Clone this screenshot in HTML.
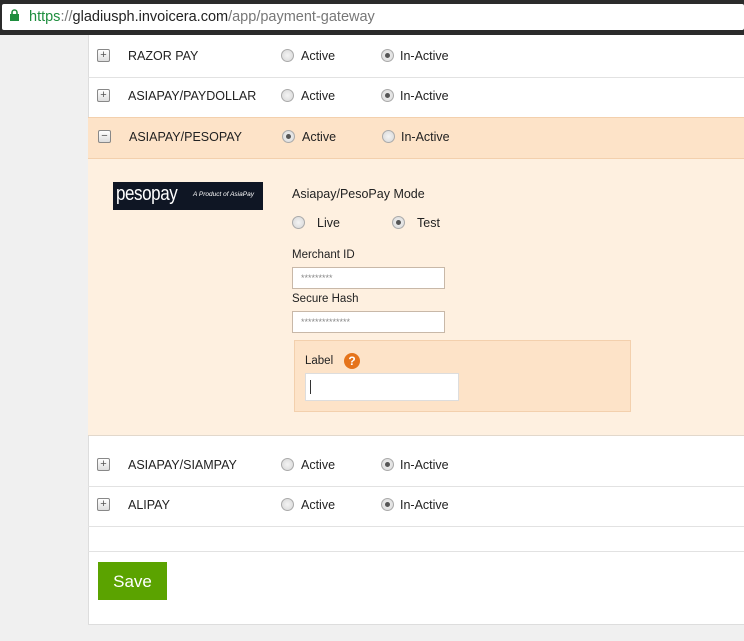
<!DOCTYPE html>
<html><head><style>
*{margin:0;padding:0;box-sizing:border-box}
body{width:744px;height:641px;background:#f0f0f0;font-family:"Liberation Sans",sans-serif;position:relative;overflow:hidden;color:#222}
.a{position:absolute}
.t{font-size:12.5px;line-height:14px}
.pm{position:absolute;width:13px;height:13px;border:1px solid #888;border-radius:2px;background:linear-gradient(#fff,#ddd);font-size:11px;line-height:11px;text-align:center;color:#555}
.r{position:absolute;width:13px;height:13px;border-radius:50%;border:1px solid #aaa;background:radial-gradient(#f4f4f4,#d6d6d6)}
.r.on::after{content:"";position:absolute;left:3px;top:3px;width:5px;height:5px;border-radius:50%;background:#555}
.line{position:absolute;left:88px;width:656px;height:1px;background:#e2e2e2}
input{position:absolute;border:1px solid #c8b8a8;background:#fff;font-size:9px;padding-left:8px;color:#888}
</style></head><body>
<div class="a" style="left:0;top:0;width:744px;height:35px;background:#2b2b2b"></div>
<div class="a" style="left:2px;top:4px;width:742px;height:26px;background:#fff;border-radius:2px"></div>
<svg class="a" style="left:9px;top:9px" width="11" height="13"><rect x="1" y="5" width="9" height="7" fill="#1e8e3e"/><path d="M3 5V3.5a2.5 2.5 0 0 1 5 0V5" stroke="#1e8e3e" stroke-width="1.6" fill="none"/></svg>
<div class="a" style="left:29px;top:9px;font-size:14.5px;color:#222"><span style="color:#1e8e3e">https</span><span style="color:#777">://</span>gladiusph.invoicera.com<span style="color:#777">/app/payment-gateway</span></div>

<div class="a" style="left:88px;top:35px;width:656px;height:590px;background:#fff;border-left:1px solid #ddd;border-bottom:1px solid #ddd"></div>

<div class="pm" style="left:97px;top:49px">+</div>
<div class="a t" style="left:128px;top:49px">RAZOR PAY</div>
<div class="r" style="left:281px;top:49px"></div><div class="a t" style="left:301px;top:49px">Active</div>
<div class="r on" style="left:381px;top:49px"></div><div class="a t" style="left:400px;top:49px">In-Active</div>
<div class="line" style="top:77px"></div>
<div class="pm" style="left:97px;top:89px">+</div>
<div class="a t" style="left:128px;top:89px">ASIAPAY/PAYDOLLAR</div>
<div class="r" style="left:281px;top:89px"></div><div class="a t" style="left:301px;top:89px">Active</div>
<div class="r on" style="left:381px;top:89px"></div><div class="a t" style="left:400px;top:89px">In-Active</div>
<div class="a" style="left:88px;top:117px;width:656px;height:42px;background:#fde3c8;border-top:1px solid #f3d0ad;border-bottom:1px solid #f3d0ad"></div>
<div class="pm" style="left:98px;top:130px">−</div>
<div class="a t" style="left:129px;top:130px">ASIAPAY/PESOPAY</div>
<div class="r on" style="left:282px;top:130px"></div><div class="a t" style="left:302px;top:130px">Active</div>
<div class="r" style="left:382px;top:130px"></div><div class="a t" style="left:401px;top:130px">In-Active</div>
<div class="a" style="left:88px;top:159px;width:656px;height:277px;background:#fef0e0;border-bottom:1px solid #e2d8cc"></div>
<div class="a" style="left:113px;top:182px;width:150px;height:28px;background:#0f1624;color:#fff;overflow:hidden"><span class="a" style="left:3px;top:1px;font-size:20px;letter-spacing:-0.5px;transform:scaleX(0.85);transform-origin:left">pesopay</span><span class="a" style="left:80px;top:9px;font-size:6.5px;font-style:italic;white-space:nowrap">A Product of AsiaPay</span></div>
<div class="a t" style="left:292px;top:187px">Asiapay/PesoPay Mode</div>
<div class="r" style="left:292px;top:216px"></div><div class="a t" style="left:317px;top:216px">Live</div>
<div class="r on" style="left:392px;top:216px"></div><div class="a t" style="left:417px;top:216px">Test</div>
<div class="a" style="left:292px;top:249px;font-size:11.5px">Merchant ID</div>
<input style="left:292px;top:267px;width:153px;height:22px" value="*********">
<div class="a" style="left:292px;top:293px;font-size:11.5px">Secure Hash</div>
<input style="left:292px;top:311px;width:153px;height:22px" value="**************">
<div class="a" style="left:294px;top:340px;width:337px;height:72px;background:#fde3c8;border:1px solid #f3d0ad"></div>
<div class="a" style="left:305px;top:355px;font-size:11.5px">Label</div>
<div class="a" style="left:344px;top:353px;width:16px;height:16px;border-radius:50%;background:#e5741c;color:#fff;font-size:12px;font-weight:bold;text-align:center;line-height:16px">?</div>
<div class="a" style="left:305px;top:373px;width:154px;height:28px;background:#fff;border:1px solid #ddd"><div class="a" style="left:4px;top:6px;width:1px;height:14px;background:#333"></div></div>
<div class="pm" style="left:97px;top:458px">+</div>
<div class="a t" style="left:128px;top:458px">ASIAPAY/SIAMPAY</div>
<div class="r" style="left:281px;top:458px"></div><div class="a t" style="left:301px;top:458px">Active</div>
<div class="r on" style="left:381px;top:458px"></div><div class="a t" style="left:400px;top:458px">In-Active</div>
<div class="line" style="top:486px"></div>
<div class="pm" style="left:97px;top:498px">+</div>
<div class="a t" style="left:128px;top:498px">ALIPAY</div>
<div class="r" style="left:281px;top:498px"></div><div class="a t" style="left:301px;top:498px">Active</div>
<div class="r on" style="left:381px;top:498px"></div><div class="a t" style="left:400px;top:498px">In-Active</div>
<div class="line" style="top:526px"></div>
<div class="line" style="top:551px"></div>
<div class="a" style="left:98px;top:562px;width:69px;height:38px;background:#5ba300;color:#fff;font-size:17px;text-align:center;line-height:40px">Save</div>
</body></html>
